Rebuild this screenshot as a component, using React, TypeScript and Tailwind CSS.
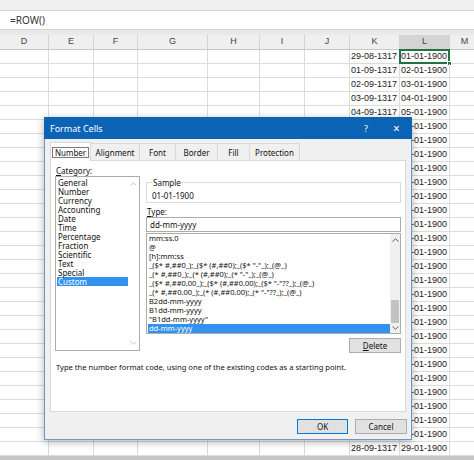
import React from "react";

const cols = [
  { label: "D", w: "w-[49px]" },
  { label: "E", w: "w-[45px]" },
  { label: "F", w: "w-[44px]" },
  { label: "G", w: "w-[70px]" },
  { label: "H", w: "w-[52px]" },
  { label: "I", w: "w-[45px]" },
  { label: "J", w: "w-[45px]" },
  { label: "K", w: "w-[50px]" },
  { label: "L", w: "w-[50px]" },
  { label: "M", w: "w-[30px]" },
];

const pad = (n: number) => String(n).padStart(2, "0");

const rows = Array.from({ length: 29 }, (_, i) => ({
  k: i === 0 ? "29-08-1317" : `${pad(i)}-09-1317`,
  l: `${pad(i + 1)}-01-1900`,
}));

const categories = [
  "General",
  "Number",
  "Currency",
  "Accounting",
  "Date",
  "Time",
  "Percentage",
  "Fraction",
  "Scientific",
  "Text",
  "Special",
  "Custom",
];

const formats = [
  "mm:ss.0",
  "@",
  "[h]:mm:ss",
  '_($* #,##0_);_($* (#,##0);_($* "-"_);_(@_)',
  '_(* #,##0_);_(* (#,##0);_(* "-"_);_(@_)',
  '_($* #,##0.00_);_($* (#,##0.00);_($* "-"??_);_(@_)',
  '_(* #,##0.00_);_(* (#,##0.00);_(* "-"??_);_(@_)',
  "B2dd-mm-yyyy",
  "B1dd-mm-yyyy",
  '"B1dd-mm-yyyy"',
  "dd-mm-yyyy",
];

const tabs = [
  { label: "Number", w: "w-[41px]" },
  { label: "Alignment", w: "w-[49px]" },
  { label: "Font", w: "w-[36px]" },
  { label: "Border", w: "w-[42px]" },
  { label: "Fill", w: "w-[32px]" },
  { label: "Protection", w: "w-[50px]" },
];

function Chevron({ up, color }: { up?: boolean; color: string }) {
  return (
    <svg width="7" height="4" viewBox="0 0 7 4" fill="none">
      <polyline
        points={up ? "0.5,3.5 3.5,0.8 6.5,3.5" : "0.5,0.5 3.5,3.2 6.5,0.5"}
        stroke={color}
        strokeWidth="1"
      />
    </svg>
  );
}

function Sheet() {
  return (
    <div className="flex flex-col h-full font-['Liberation_Sans',sans-serif]">
      <div className="h-[11px] bg-[#f0f0f0] border-b border-[#d5d5d5]" />
      <div className="h-[19px] bg-white border-b border-[#d5d5d5] pl-[10px] flex items-center text-[10px] text-[#333] font-['Noto_Sans',sans-serif]">
        =ROW()
      </div>
      <div className="h-[5px] bg-[#e9e9e9]" />
      <div className="h-[15px] flex bg-[#efefef] border-b border-[#c8c8c8]">
        {cols.map((c) => (
          <div
            key={c.label}
            className={`${c.w} shrink-0 border-r border-[#d4d4d4] flex items-center justify-center text-[9px] text-[#444] ${
              c.label === "L" ? "bg-[#d4d4d4]" : ""
            }`}
          >
            {c.label}
          </div>
        ))}
      </div>
      {rows.map((r, i) => (
        <div key={i} className="h-[14px] flex border-b border-[#dcdcdc] text-[9px] text-[#222] whitespace-nowrap">
          {cols.map((c) => (
            <div
              key={c.label}
              className={`${c.w} shrink-0 border-r border-[#dcdcdc] flex items-center justify-end pr-[2px] relative`}
            >
              {c.label === "K" ? r.k : c.label === "L" ? r.l : ""}
              {c.label === "L" && i === 0 && (
                <>
                  <div className="absolute -left-px -top-px -right-px -bottom-px border-2 border-[#217346]" />
                  <div className="absolute -right-[3px] -bottom-[3px] w-[5px] h-[5px] bg-[#217346] border border-white" />
                </>
              )}
            </div>
          ))}
        </div>
      ))}
      <div className="flex-1 bg-[#c6c6c6]" />
    </div>
  );
}

function Dialog() {
  return (
    <div className="absolute left-[44px] top-[117px] w-[368px] h-[323px] flex flex-col bg-[#f0f0f0] border border-t-0 border-[#6e96c8] shadow-[0_2px_8px_rgba(0,0,0,0.3)] font-['Noto_Sans',sans-serif] text-[#111] text-[8px] leading-[9px]">
      {/* title bar */}
      <div className="-mx-px h-[22px] bg-[#0b63b6] flex items-center justify-between text-white">
        <span className="pl-[6px] text-[9px]">Format Cells</span>
        <div className="flex h-full">
          <div className="w-[30px] flex items-center justify-center text-[9px]">?</div>
          <div className="w-[31px] flex items-center justify-center text-[12px]">×</div>
        </div>
      </div>

      {/* tabs */}
      <div className="flex items-end h-[19px] mt-[3px] mx-[5px] relative z-10">
        {tabs.map((t, i) =>
          i === 0 ? (
            <div
              key={t.label}
              className={`${t.w} h-[19px] bg-white border border-b-0 border-[#d9d9d9] flex items-center justify-center`}
            >
              <span className="border border-[#7a7a7a] px-[2px] leading-[9px]">{t.label}</span>
            </div>
          ) : (
            <div
              key={t.label}
              className={`${t.w} h-[17px] mb-px border-t border-r border-[#d9d9d9] flex items-center justify-center`}
            >
              {t.label}
            </div>
          )
        )}
      </div>

      {/* panel */}
      <div className="-mt-px mx-[5px] h-[252px] bg-white border border-[#d9d9d9] px-[4px] pt-[5px]">
        <div className="flex gap-[6px]">
          <div className="w-[85px] flex flex-col">
            <div className="h-[10px] pl-[1px]">
              <span className="underline">C</span>ategory:
            </div>
            <div className="h-[175px] border border-[#acacac] flex">
              <div className="flex-1 pt-[1px] pl-px">
                {categories.map((c) => (
                  <div
                    key={c}
                    className={`h-[9px] pl-[1px] leading-[9px] ${c === "Custom" ? "bg-[#3392f0] text-white" : ""}`}
                  >
                    {c}
                  </div>
                ))}
              </div>
              <div className="w-[11px] flex flex-col justify-between items-center py-[5px]">
                <Chevron up color="#c4c4c4" />
                <Chevron color="#c4c4c4" />
              </div>
            </div>
          </div>

          <div className="w-[255px] flex flex-col">
            <fieldset className="mt-[12px] h-[25px] border border-[#dcdcdc] px-[5px]">
              <legend className="px-[1px] leading-[9px]">Sample</legend>
              <div className="pt-[4px]">01-01-1900</div>
            </fieldset>
            <div className="mt-[4px] h-[9px] pl-[1px]">
              <span className="underline">T</span>ype:
            </div>
            <div className="mt-px h-[15px] border border-[#acacac] flex items-center pl-[3px]">dd-mm-yyyy</div>
            <div className="mt-px h-[101px] border border-[#acacac] flex">
              <div className="flex-1 pl-px whitespace-nowrap overflow-hidden text-[7.5px]">
                {formats.map((f, i) => (
                  <div
                    key={i}
                    className={`h-[9px] pl-[1px] ${i === formats.length - 1 ? "bg-[#3392f0] text-white" : ""}`}
                  >
                    {f}
                  </div>
                ))}
              </div>
              <div className="w-[10px] bg-[#f0f0f0] flex flex-col items-center">
                <div className="h-[12px] flex items-center">
                  <Chevron up color="#606060" />
                </div>
                <div className="flex-1" />
                <div className="w-[8px] h-[23px] bg-[#c2c2c2]" />
                <div className="h-[10px] flex items-center">
                  <Chevron color="#606060" />
                </div>
              </div>
            </div>
            <div className="mt-[4px] self-end w-[52px] h-[15px] bg-[#e1e1e1] border border-[#adadad] flex items-center justify-center">
              <span>
                <span className="underline">D</span>elete
              </span>
            </div>
          </div>
        </div>
        <div className="mt-[10px] pl-[1px] text-[7.6px]">
          Type the number format code, using one of the existing codes as a starting point.
        </div>
      </div>

      {/* footer */}
      <div className="flex justify-end gap-[7px] pt-[7px] pr-[4px]">
        <div className="w-[51px] h-[15px] bg-[#e1e1e1] border border-[#0078d7] flex items-center justify-center">OK</div>
        <div className="w-[52px] h-[15px] bg-[#e1e1e1] border border-[#adadad] flex items-center justify-center">
          Cancel
        </div>
      </div>
    </div>
  );
}

export default function App() {
  return (
    <div className="relative w-[474px] h-[460px] overflow-hidden bg-white">
      <Sheet />
      <Dialog />
    </div>
  );
}
